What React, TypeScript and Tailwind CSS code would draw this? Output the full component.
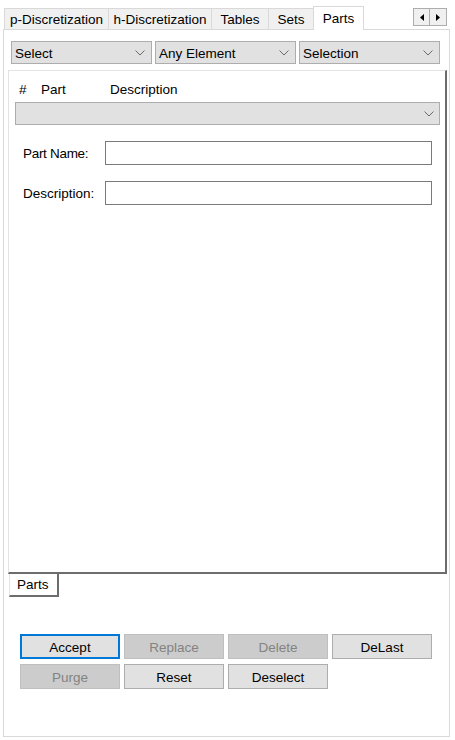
import React from "react";

const Chevron = () => (
  <svg width="10" height="6" viewBox="0 0 10 6" className="shrink-0">
    <polyline points="0.5,0.5 5,5 9.5,0.5" fill="none" stroke="#6a6a6a" strokeWidth="1" />
  </svg>
);

const Combo = ({ label, w }: { label: string; w: string }) => (
  <div className={`${w} h-[23px] bg-[#e1e1e1] border border-[#adadad] flex items-center justify-between pl-[3px] pr-[6px]`}>
    <span className="text-black leading-none mt-[2px]">{label}</span>
    <Chevron />
  </div>
);

const Btn = ({ label, kind }: { label: string; kind: "focus" | "normal" | "disabled" }) => {
  const cls =
    kind === "focus"
      ? "bg-[#e1e1e1] border-2 border-[#0078d7] text-black"
      : kind === "disabled"
      ? "bg-[#cccccc] border border-[#bfbfbf] text-[#838383]"
      : "bg-[#e1e1e1] border border-[#adadad] text-black";
  return (
    <div className={`w-[100px] h-[25px] flex items-center justify-center ${cls}`}>
      <span className="leading-none mt-[2px]">{label}</span>
    </div>
  );
};

export default function App() {
  const tabs = [
    { label: "p-Discretization", w: "w-[104px]" },
    { label: "h-Discretization", w: "w-[103px]" },
    { label: "Tables", w: "w-[57px]" },
    { label: "Sets", w: "w-[45px]" },
  ];
  return (
    <div
      className="w-[455px] h-[740px] bg-white text-[13.5px] text-black relative"
      style={{ fontFamily: '"Liberation Sans", Arial, sans-serif' }}
    >
      {/* tab strip */}
      <div className="h-[29px] flex items-end pl-[4px] relative">
        {tabs.map((t) => (
          <div
            key={t.label}
            className={`${t.w} h-[21px] bg-[#f0f0f0] border-t border-l border-[#d9d9d9] flex items-center justify-center`}
          >
            <span className="leading-none mt-[2px]">{t.label}</span>
          </div>
        ))}
        <div className="w-[51px] h-[24px] bg-white border-t border-l border-r border-[#d9d9d9] -mb-px z-10 flex items-start justify-center pt-[5px] relative">
          <span className="leading-none">Parts</span>
        </div>
        {/* scroll arrows */}
        <div className="absolute left-[413px] top-[8px] flex">
          <div className="w-[17px] h-[18px] bg-[#f0f0f0] border border-[#adadad] flex items-center justify-center">
            <svg width="4" height="7" viewBox="0 0 4 7">
              <polygon points="4,0 0,3.5 4,7" fill="#000" />
            </svg>
          </div>
          <div className="w-[17px] h-[18px] bg-[#f0f0f0] border border-l-0 border-[#adadad] flex items-center justify-center">
            <svg width="4" height="7" viewBox="0 0 4 7">
              <polygon points="0,0 4,3.5 0,7" fill="#000" />
            </svg>
          </div>
        </div>
      </div>

      {/* main panel */}
      <div className="ml-[3px] w-[447px] h-[708px] border border-[#d9d9d9] bg-white flex flex-col">
        <div className="flex gap-[3px] ml-[7px] mt-[11px]">
          <Combo label="Select" w="w-[141px]" />
          <Combo label="Any Element" w="w-[141px]" />
          <Combo label="Selection" w="w-[141px]" />
        </div>

        {/* inner panel */}
        <div className="ml-[4px] mt-[6px] w-[439px] h-[504px] border-t border-l border-t-[#e3e3e3] border-l-[#e3e3e3] border-r-2 border-b-2 border-r-[#6d6d6d] border-b-[#6d6d6d] flex flex-col">
          <div className="flex pl-[10px] pt-[12px] h-[27px] leading-none">
            <span className="w-[22px]">#</span>
            <span className="w-[69px]">Part</span>
            <span>Description</span>
          </div>
          <div className="ml-[6px] mt-[4px] w-[425px] h-[23px] bg-[#e1e1e1] border border-[#adadad] flex items-center justify-end pr-[5px]">
            <Chevron />
          </div>
          <div className="flex items-center mt-[16px] ml-[14px]">
            <span className="w-[82px] leading-none tracking-[-0.3px] mt-[2px]">Part Name:</span>
            <div className="w-[327px] h-[24px] border border-[#7a7a7a] bg-white" />
          </div>
          <div className="flex items-center mt-[16px] ml-[14px]">
            <span className="w-[82px] leading-none mt-[2px]">Description:</span>
            <div className="w-[327px] h-[24px] border border-[#7a7a7a] bg-white" />
          </div>
        </div>

        {/* bottom tab */}
        <div className="ml-[5px] w-[50px] h-[23px] border-l border-l-[#e3e3e3] border-b-2 border-r-2 border-b-[#6d6d6d] border-r-[#6d6d6d] bg-white flex items-center pl-[7px]">
          <span className="leading-none">Parts</span>
        </div>

        {/* buttons */}
        <div className="ml-[16px] mt-[37px] flex flex-col gap-[5px]">
          <div className="flex gap-[4px]">
            <Btn label="Accept" kind="focus" />
            <Btn label="Replace" kind="disabled" />
            <Btn label="Delete" kind="disabled" />
            <Btn label="DeLast" kind="normal" />
          </div>
          <div className="flex gap-[4px]">
            <Btn label="Purge" kind="disabled" />
            <Btn label="Reset" kind="normal" />
            <Btn label="Deselect" kind="normal" />
          </div>
        </div>
      </div>
    </div>
  );
}
